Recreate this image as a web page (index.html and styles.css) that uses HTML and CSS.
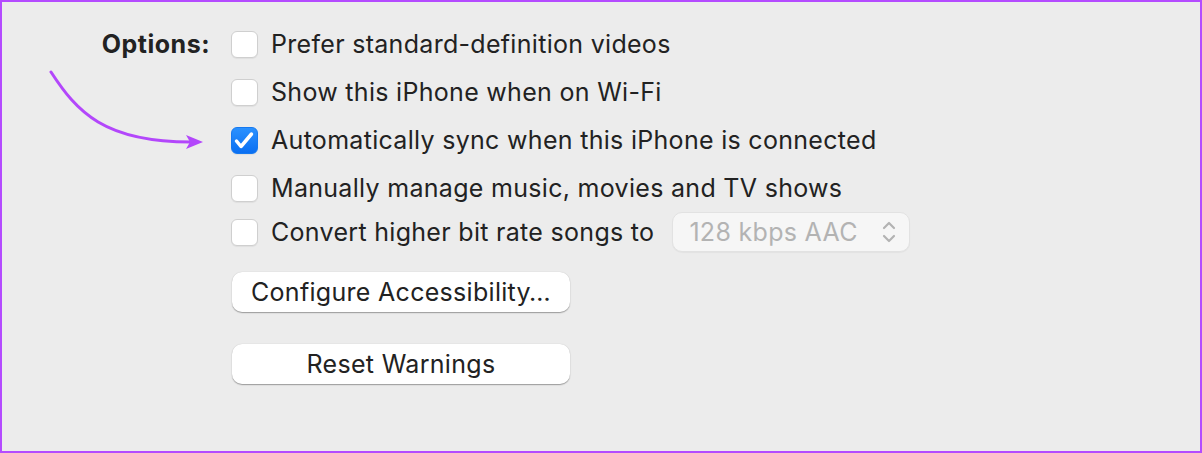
FILE: index.html
```html
<!DOCTYPE html>
<html>
<head>
<meta charset="utf-8">
<link rel="stylesheet" href="styles.css">
</head>
<body>
<div class="frame">
  <svg class="arrow" width="160" height="90" viewBox="0 0 160 90">
    <path d="M2 2 C 28 42, 55 72, 142 72" fill="none" stroke="#b347fb" stroke-width="3" stroke-linecap="round"/>
    <path d="M137 65 L154 72 L137 79 L141 72 Z" fill="#b347fb"/>
  </svg>
  <div class="panel">
    <div class="label">Options:</div>
    <div class="options">
      <div class="row"><span class="box"></span><span class="txt">Prefer standard-definition videos</span></div>
      <div class="row"><span class="box"></span><span class="txt">Show this iPhone when on Wi-Fi</span></div>
      <div class="row"><span class="box checked"><svg width="27" height="27" viewBox="0 0 27 27"><path d="M5.5 14 L10 19.5 L20.5 7" fill="none" stroke="#fff" stroke-width="3.5" stroke-linecap="round" stroke-linejoin="round"/></svg></span><span class="txt">Automatically sync when this iPhone is connected</span></div>
      <div class="row"><span class="box"></span><span class="txt">Manually manage music, movies and TV shows</span></div>
      <div class="row row-convert"><span class="box"></span><span class="txt">Convert higher bit rate songs to</span>
        <div class="select"><span>128 kbps AAC</span>
          <svg width="14" height="26" viewBox="0 0 14 26"><path d="M2 9 L7 4 L12 9 M2 17 L7 22 L12 17" fill="none" stroke="#b3b3b3" stroke-width="2.2" stroke-linecap="round" stroke-linejoin="round"/></svg>
        </div>
      </div>
      <div class="btn first">Configure Accessibility…</div>
      <div class="btn">Reset Warnings</div>
    </div>
  </div>
</div>
</body>
</html>
```
FILE: styles.css
```css
html, body { margin: 0; padding: 0; }
body { width: 1202px; height: 453px; background: #ececec; font-family: "Inter", "Liberation Sans", sans-serif; color: #222; }
.frame { position: relative; box-sizing: border-box; width: 1202px; height: 453px; border: 2px solid #b44bff; background: #ececec; }
.arrow { position: absolute; left: 47px; top: 68px; }
.panel { display: flex; padding-top: 28px; }
.label { width: 208px; text-align: right; font-weight: 700; font-size: 25px; line-height: 28px; color: #222; letter-spacing: 0.5px; }
.options { margin-left: 21px; display: flex; flex-direction: column; }
.row { display: flex; align-items: center; height: 28px; margin-bottom: 20px; }
.row-convert { height: 40px; margin-top: -10px; margin-bottom: 20px; }
.box { box-sizing: border-box; width: 27px; height: 27px; border-radius: 6px; background: #fff; border: 1px solid #cfcfcf; box-shadow: 0 1px 1px rgba(0,0,0,0.06); flex: none; }
.box.checked { background: linear-gradient(#2a91ff, #0a6ff2); border-color: #1679f0; }
.box.checked svg { display: block; margin: -1px; }
.txt { margin-left: 13px; font-size: 25px; line-height: 28px; color: #222; letter-spacing: 0.3px; white-space: nowrap; }
.select { box-sizing: border-box; margin-left: 18px; width: 238px; height: 40px; border-radius: 10px; background: #f6f6f6; border: 1px solid #e2e2e2; box-shadow: 0 1px 1px rgba(0,0,0,0.04); display: flex; align-items: center; justify-content: space-between; padding: 0 13px 0 16px; flex: none; }
.select span { font-size: 25px; color: #b3b3b3; letter-spacing: 0.3px; }
.select svg { display: block; }
.btn { box-sizing: border-box; width: 338px; height: 40px; margin-left: 1px; border-radius: 10px; background: #fff; box-shadow: 0 0.5px 1px rgba(0,0,0,0.2), 0 1px 1.5px rgba(0,0,0,0.18); display: flex; align-items: center; justify-content: center; font-size: 25px; color: #222; letter-spacing: 0.3px; margin-bottom: 32px; }
```
